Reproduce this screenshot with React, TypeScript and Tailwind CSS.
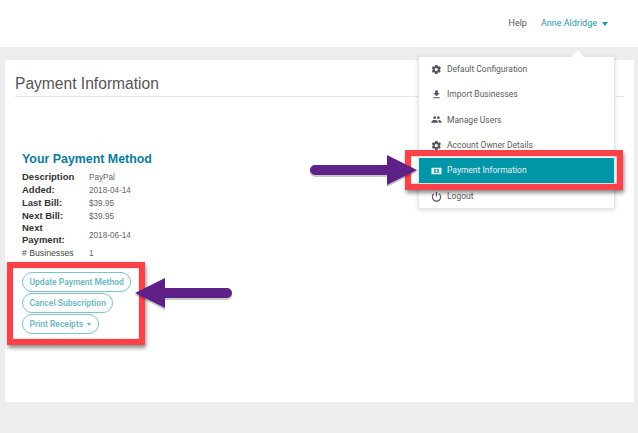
import { ReactNode } from "react";

const arial = "font-['Liberation_Sans',Arial,sans-serif]";

function GearIcon() {
  return (
    <svg viewBox="0 0 24 24" className="w-[11px] h-[11px] fill-[#555]">
      <path d="M19.4 13c.1-.3.1-.7.1-1s0-.7-.1-1l2.1-1.6c.2-.2.2-.4.1-.6l-2-3.5c-.1-.2-.4-.3-.6-.2l-2.5 1c-.5-.4-1.1-.7-1.7-1L14 2.4c0-.2-.2-.4-.5-.4h-4c-.3 0-.5.2-.5.4l-.4 2.7c-.6.3-1.2.6-1.7 1l-2.5-1c-.2-.1-.5 0-.6.2l-2 3.5c-.1.2-.1.4.1.6L4 11c-.1.3-.1.7-.1 1s0 .7.1 1l-2.1 1.6c-.2.2-.2.4-.1.6l2 3.5c.1.2.4.3.6.2l2.5-1c.5.4 1.1.7 1.7 1l.4 2.7c0 .2.2.4.5.4h4c.3 0 .5-.2.5-.4l.4-2.7c.6-.3 1.2-.6 1.7-1l2.5 1c.2.1.5 0 .6-.2l2-3.5c.1-.2.1-.4-.1-.6L19.4 13zM11.5 15.5a3.5 3.5 0 1 1 0-7 3.5 3.5 0 0 1 0 7z" />
    </svg>
  );
}

function DownloadIcon() {
  return (
    <svg viewBox="0 0 24 24" className="w-[11px] h-[11px] fill-[#555]">
      <path d="M19 9h-4V3H9v6H5l7 7 7-7zM5 18v2h14v-2H5z" />
    </svg>
  );
}

function UsersIcon() {
  return (
    <svg viewBox="0 0 24 24" className="w-[11px] h-[11px] fill-[#555]">
      <path d="M16 11a3 3 0 1 0 0-6 3 3 0 0 0 0 6zm-8 0a3 3 0 1 0 0-6 3 3 0 0 0 0 6zm0 2c-2.3 0-7 1.2-7 3.500V19h14v-2.500C15 14.200 10.300 13 8 13zm8 0h-1c1.200.9 2 2 2 3.500V19h6v-2.500c0-2.300-4.700-3.500-7-3.500z" />
    </svg>
  );
}

function MoneyIcon() {
  return (
    <svg viewBox="0 0 24 24" className="w-[12px] h-[12px] fill-[#e4f3f5]">
      <path fillRule="evenodd" d="M1 5h22v14H1V5zm6 2.500v9h10v-9H7z" />
      <path d="M10 8.500h4v7h-4z" />
    </svg>
  );
}

function PowerIcon() {
  return (
    <svg viewBox="0 0 24 24" className="w-[11px] h-[11px] fill-none stroke-[#555] stroke-[2.4]">
      <path d="M12 2v10" />
      <path d="M6.500 6a9 9 0 1 0 11 0" />
    </svg>
  );
}

function MenuItem({ icon, label, active }: { icon: ReactNode; label: string; active?: boolean }) {
  return (
    <div
      className={`h-[25.400px] flex items-center pl-[12px] gap-[5px] text-[8.500px] ${
        active ? "bg-[#0096a8] text-[#e4f3f5]" : "text-[#5c5c5c]"
      }`}
    >
      <span className="w-[11px] flex justify-center">{icon}</span>
      <span>{label}</span>
    </div>
  );
}

function Row({ label, value, plain }: { label: string; value: string; plain?: boolean }) {
  return (
    <div className="flex items-center min-h-[13px]">
      <div className={`w-[60px] mr-[7px] leading-[12px] ${plain ? "text-[8.700px] text-[#444]" : "text-[9.500px] font-bold text-[#333]"}`}>
        {label}
      </div>
      <div className="pt-[2px] leading-[11px] text-[8.200px] text-[#666]">{value}</div>
    </div>
  );
}

function PillButton({ children }: { children: ReactNode }) {
  return (
    <div className="self-start h-[20px] px-[6.500px] flex items-center gap-[4px] rounded-[10px] border border-[#7cc3d0] text-[#6db7c6] text-[8.500px] font-semibold">
      {children}
    </div>
  );
}

function Arrow({ className, length, flip }: { className: string; length: number; flip?: boolean }) {
  const d = `M5 10H${length - 30}V0L${length} 15L${length - 30} 30V20H5a5 5 0 0 1 0-10z`;
  return (
    <svg viewBox={`0 0 ${length} 34`} className={`absolute ${className}`}>
      <g transform={flip ? `translate(${length} 0) scale(-1 1)` : undefined}>
        <path d={d} fill="#000" opacity="0.22" transform="translate(0 2)" />
        <path d={d} fill="#5e2187" />
      </g>
    </svg>
  );
}

export default function App() {
  return (
    <div className="relative w-[638px] h-[433px] overflow-hidden bg-[#ededed] font-['Roboto',sans-serif]">
      <header className="h-[47px] bg-white flex items-center justify-end pt-[1px] pr-[30px] text-[9px]">
        <span className="text-[#5c5c5c] mr-[14px]">Help</span>
        <span className="text-[#1f98a8]">Anne Aldridge</span>
        <span className="ml-[5px] w-0 h-0 border-x-[3.500px] border-x-transparent border-t-[4px] border-t-[#1f98a8]" />
      </header>

      <main className="mt-[13px] mx-[4px] ml-[5px] h-[342px] bg-white px-[10px]">
        <h1 className={`${arial} h-[37px] pt-[14px] text-[15.600px] leading-[20px] text-[#555] border-b border-[#e6e6e6]`}>
          Payment Information
        </h1>

        <section className={`${arial} pl-[7px] pt-[54px]`}>
          <h2 className="text-[12.400px] leading-[16px] font-bold text-[#0b7a9c] mb-[3px]">Your Payment Method</h2>
          <Row label="Description" value="PayPal" />
          <Row label="Added:" value="2018-04-14" />
          <Row label="Last Bill:" value="$39.95" />
          <Row label="Next Bill:" value="$39.95" />
          <Row label="Next Payment:" value="2018-06-14" />
          <Row label="# Businesses" value="1" plain />
          <div className="font-['Roboto',sans-serif] flex flex-col gap-[1px] mt-[13px]">
            <PillButton>Update Payment Method</PillButton>
            <PillButton>Cancel Subscription</PillButton>
            <PillButton>
              Print Receipts
              <span className="w-0 h-0 border-x-[2.500px] border-x-transparent border-t-[3px] border-t-[#6db7c6]" />
            </PillButton>
          </div>
        </section>
      </main>

      {/* dropdown */}
      <div className="absolute left-[418px] top-[56px] w-[197px] h-[153px] bg-white border border-[#e6e6e6] rounded-[2px] shadow-[0_1px_4px_rgba(0,0,0,0.15)]">
        <div className="absolute -top-[5px] left-[154px] w-[9px] h-[9px] rotate-45 bg-white" />
        <div className="relative -mt-[0.500px]">
          <MenuItem icon={<GearIcon />} label="Default Configuration" />
          <MenuItem icon={<DownloadIcon />} label="Import Businesses" />
          <MenuItem icon={<UsersIcon />} label="Manage Users" />
          <MenuItem icon={<GearIcon />} label="Account Owner Details" />
          <MenuItem icon={<MoneyIcon />} label="Payment Information" active />
          <MenuItem icon={<PowerIcon />} label="Logout" />
        </div>
      </div>

      {/* annotations */}
      <div className="absolute left-[405px] top-[150px] w-[218px] h-[40px] border-[6px] border-[#fb4249] shadow-[1px_3px_4px_rgba(0,0,0,0.45),inset_0_0_2px_rgba(0,0,0,0.5)]" />
      <div className="absolute left-[7px] top-[262px] w-[138px] h-[83px] border-[6px] border-[#fb4249] shadow-[1px_3px_4px_rgba(0,0,0,0.45),inset_0_0_2px_rgba(0,0,0,0.3)]" />
      <Arrow className="left-[310px] top-[155px] w-[107px] h-[34px]" length={107} />
      <Arrow className="left-[135px] top-[278px] w-[97px] h-[34px]" length={97} flip />
    </div>
  );
}
